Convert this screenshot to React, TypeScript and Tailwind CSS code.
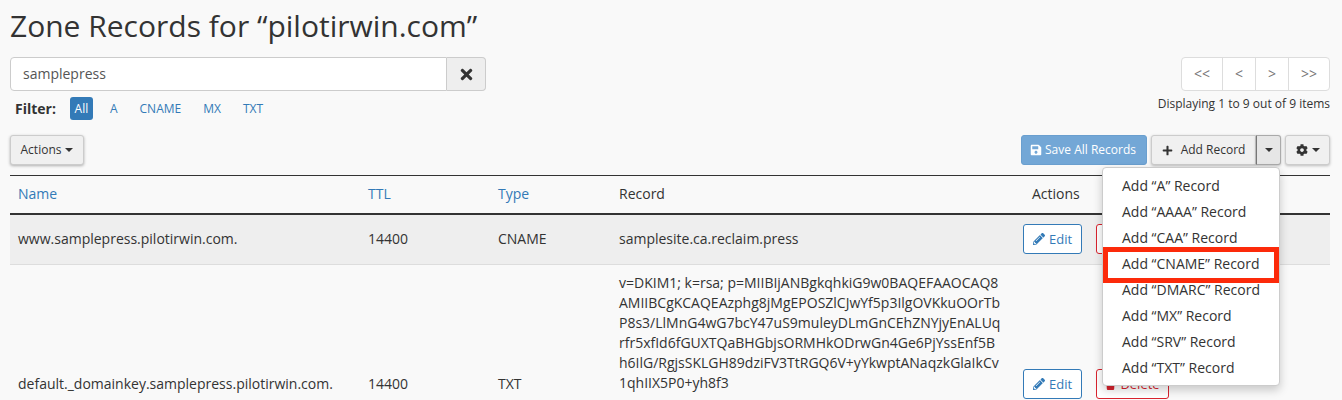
import { FaTimes, FaSave, FaPlus, FaCog, FaPencilAlt, FaTrash } from "react-icons/fa";

const filters = ["A", "CNAME", "MX", "TXT"];
const pages = ["<<", "<", ">", ">>"];
const addItems = ["A", "AAAA", "CAA", "CNAME", "DMARC", "MX", "SRV", "TXT"];
const dkim = [
  "v=DKIM1; k=rsa; p=MIIBIjANBgkqhkiG9w0BAQEFAAOCAQ8",
  "AMIIBCgKCAQEAzphg8jMgEPOSZlCJwYf5p3IlgOVKkuOOrTb",
  "P8s3/LlMnG4wG7bcY47uS9muleyDLmGnCEhZNYjyEnALUq",
  "rfr5xfId6fGUXTQaBHGbjsORMHkODrwGn4Ge6PjYssEnf5B",
  "h6IlG/RgjsSKLGH89dziFV3TtRGQ6V+yYkwptANaqzkGlaIkCv",
  "1qhIIX5P0+yh8f3",
];

// small caret used by the dropdown buttons
function Caret() {
  return <span className="inline-block w-0 h-0 border-x-4 border-x-transparent border-t-4 border-t-[#333]" />;
}

function RowActions() {
  return (
    <div className="flex gap-[14px] text-[13px]">
      <button className="h-[30px] w-[59px] flex items-center justify-center gap-1 rounded-[3px] border border-[#337ab7] text-[#337ab7] bg-white">
        <FaPencilAlt className="text-[12px]" /> Edit
      </button>
      <button className="h-[30px] w-[73px] flex items-center justify-center gap-1 rounded-[3px] border border-[#d9232e] text-[#d9232e] bg-white">
        <FaTrash className="text-[11px]" /> Delete
      </button>
    </div>
  );
}

export default function App() {
  return (
    <div className="relative h-[400px] overflow-hidden bg-[#f9f9f9] pl-[10px] pr-[12px] text-[14px] leading-5 text-[#333] font-['Open_Sans',sans-serif]">
      <h1 className="pt-[6px] text-[30px] leading-[40px] font-normal">Zone Records for “pilotirwin.com”</h1>

      <div className="flex justify-between mt-[11px]">
        <div>
          <div className="flex w-[476px] h-[34px]">
            <div className="flex-1 flex items-center pl-3 bg-white border border-[#ccc] rounded-l-[4px] text-[#555]">samplepress</div>
            <div className="w-[39px] flex items-center justify-center bg-[#eee] border border-l-0 border-[#ccc] rounded-r-[4px]">
              <FaTimes className="text-[17px] text-[#333]" />
            </div>
          </div>
          <div className="flex items-center mt-[6px] ml-[5px] h-[23px] text-[12px]">
            <span className="font-bold text-[14px] mr-[14px]">Filter:</span>
            <span className="w-[23px] h-[23px] flex items-center justify-center rounded-[3px] bg-[#337ab7] text-white">All</span>
            {filters.map((f, i) => (
              <span key={f} className={`${i === 0 ? "ml-[17px]" : "ml-[22px]"} text-[#337ab7]`}>{f}</span>
            ))}
          </div>
        </div>
        <div className="flex flex-col items-end">
          <div className="flex h-[34px] bg-white border border-[#ddd] rounded-[4px] text-[#777]">
            {pages.map((p, i) => (
              <span key={p} className={`flex items-center justify-center ${i === 0 ? "w-[40px]" : i === 3 ? "w-[41px]" : "w-[33px]"} ${i > 0 ? "border-l border-[#ddd]" : ""}`}>{p}</span>
            ))}
          </div>
          <div className="mt-[3px] text-[12px]">Displaying 1 to 9 out of 9 items</div>
        </div>
      </div>

      <div className="flex justify-between items-center mt-[15px] h-[30px] text-[12px]">
        <button className="h-[30px] w-[74px] flex items-center justify-center gap-1 bg-[#f0f0f0] border border-[#ccc] rounded-[3px] shadow-[0_1px_3px_rgba(0,0,0,0.3)]">
          Actions <Caret />
        </button>
        <div className="flex items-center">
          <button className="h-[30px] w-[126px] flex items-center justify-center gap-[3px] pr-[2px] rounded-[3px] bg-[#73a7d6] border border-[#6a9fcf] text-white">
            <FaSave className="text-[12px]" /> Save All Records
          </button>
          <button className="ml-[4px] h-[30px] w-[105px] flex items-center justify-center gap-2 bg-[#f0f0f0] border border-[#ccc] rounded-l-[3px] shadow-[0_1px_3px_rgba(0,0,0,0.25)]">
            <FaPlus className="text-[11px]" /> Add Record
          </button>
          <button className="h-[30px] w-[25px] flex items-center justify-center bg-[#e6e6e6] border border-l-[#777] border-[#aaa] rounded-r-[3px] shadow-[0_1px_3px_rgba(0,0,0,0.25)]">
            <Caret />
          </button>
          <button className="ml-[4px] h-[30px] w-[45px] flex items-center justify-center gap-1 bg-[#f0f0f0] border border-[#ccc] rounded-[3px] shadow-[0_1px_3px_rgba(0,0,0,0.25)]">
            <FaCog className="text-[12px]" /> <Caret />
          </button>
        </div>
      </div>

      <table className="table-fixed w-full mt-[10px] border-t border-[#333] border-collapse">
        <thead>
          <tr className="h-[38px] border-b-2 border-[#333] text-left">
            <th className="w-[350px] pl-2 font-normal text-[#337ab7]">Name</th>
            <th className="w-[130px] pl-2 font-normal text-[#337ab7]">TTL</th>
            <th className="w-[121px] pl-2 font-normal text-[#337ab7]">Type</th>
            <th className="w-[404px] pl-2 font-normal">Record</th>
            <th className="pl-[17px] font-normal">Actions</th>
          </tr>
        </thead>
        <tbody>
          <tr className="h-[51px] bg-[#eee] border-b border-[#ddd]">
            <td className="pl-2">www.samplepress.pilotirwin.com.</td>
            <td className="pl-2">14400</td>
            <td className="pl-2">CNAME</td>
            <td className="pl-2">samplesite.ca.reclaim.press</td>
            <td className="pl-2"><RowActions /></td>
          </tr>
          <tr className="align-bottom">
            <td className="pl-2 pb-[5px]">default._domainkey.samplepress.pilotirwin.com.</td>
            <td className="pl-2 pb-[5px]">14400</td>
            <td className="pl-2 pb-[5px]">TXT</td>
            <td className="pl-2 pt-2 pb-[6px]">
              {dkim.map((line) => (
                <div key={line} className="whitespace-nowrap">{line}</div>
              ))}
            </td>
            <td className="pl-2 pb-0"><RowActions /></td>
          </tr>
        </tbody>
      </table>

      {/* Add Record menu */}
      <div className="absolute left-[1102px] top-[167px] w-[178px] h-[219px] py-[5px] bg-white border border-[#ccc] rounded-[4px] shadow-[0_4px_10px_rgba(0,0,0,0.2)]">
        {addItems.map((t) => (
          <div key={t} className="h-[26px] pl-[19px] flex items-center whitespace-nowrap">Add “{t}” Record</div>
        ))}
      </div>
      {/* red highlight */}
      <div className="absolute left-[1103px] top-[247px] w-[176px] h-[36px] border-[5px] border-[#fc2a0a]" />
    </div>
  );
}
